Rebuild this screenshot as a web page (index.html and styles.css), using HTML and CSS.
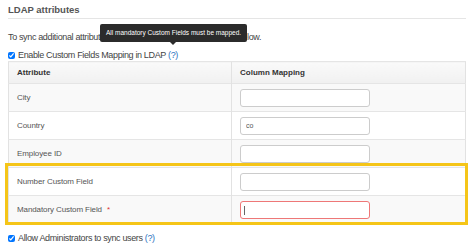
FILE: index.html
```html
<!DOCTYPE html>
<html lang="en">
<head>
    <meta charset="UTF-8">
    <title>LDAP attributes</title>
    <link rel="stylesheet" href="styles.css">
</head>
<body>
    <div class="section">
        <h2 class="section-title">LDAP attributes</h2>

        <p class="intro">
            To sync additional attributes, map them to Custom Fields listed below.
            <span class="tooltip">All mandatory Custom Fields must be mapped.</span>
        </p>

        <label class="check-row">
            <input type="checkbox" checked>
            <span>Enable Custom Fields Mapping in LDAP <a href="#" class="help">(?)</a></span>
        </label>

        <div class="table-wrap">
            <table class="mapping">
                <thead>
                    <tr>
                        <th>Attribute</th>
                        <th>Column Mapping</th>
                    </tr>
                </thead>
                <tbody>
                    <tr>
                        <td>City</td>
                        <td><input type="text" class="field"></td>
                    </tr>
                    <tr>
                        <td>Country</td>
                        <td><input type="text" class="field" value="co"></td>
                    </tr>
                    <tr>
                        <td>Employee ID</td>
                        <td><input type="text" class="field"></td>
                    </tr>
                    <tr>
                        <td>Number Custom Field</td>
                        <td><input type="text" class="field"></td>
                    </tr>
                    <tr>
                        <td>Mandatory Custom Field <span class="required">*</span></td>
                        <td>
                            <div class="field-wrap">
                                <input type="text" class="field field-error">
                                <span class="caret"></span>
                            </div>
                        </td>
                    </tr>
                </tbody>
            </table>
            <div class="highlight"></div>
        </div>

        <label class="check-row bottom">
            <input type="checkbox" checked>
            <span>Allow Administrators to sync users <a href="#" class="help">(?)</a></span>
        </label>
    </div>
</body>
</html>
```

FILE: styles.css
```css
* {
    box-sizing: border-box;
    margin: 0;
    padding: 0;
}

body {
    font-family: 'Liberation Sans', Arial, sans-serif;
    font-size: 9px;
    color: #333;
    background: white;
    padding: 0 8px;
}

.section-title {
    font-size: 9.5px;
    font-weight: bold;
    color: #555;
    padding-top: 4px;
    height: 19px;
    border-bottom: 1px solid #e5e5e5;
}

.intro,
.check-row {
    font-size: 9px;
    letter-spacing: -0.35px;
    color: #444;
}

.intro {
    position: relative;
    margin-top: 12px;
    line-height: 12px;
}

.tooltip {
    position: absolute;
    left: 92px;
    top: -7px;
    background: #2b2b2b;
    color: white;
    font-size: 6.5px;
    letter-spacing: 0;
    line-height: 18px;
    padding: 0 6px;
    border-radius: 2px;
    white-space: nowrap;
}

.tooltip::after {
    content: '';
    position: absolute;
    left: 70px;
    bottom: -3px;
    border-left: 3px solid transparent;
    border-right: 3px solid transparent;
    border-top: 3px solid #2b2b2b;
}

.check-row {
    display: flex;
    align-items: center;
    gap: 3px;
    margin-top: 6px;
    height: 12px;
}

.check-row input {
    width: 7px;
    height: 7px;
    margin: 0;
}

.help {
    color: #2a72c0;
    text-decoration: none;
}

.table-wrap {
    position: relative;
}

.mapping {
    width: 458px;
    border-collapse: collapse;
    border: 1px solid #e2e2e2;
}

.mapping th,
.mapping td {
    text-align: left;
    padding: 0 8px;
    border-top: 1px solid #e5e5e5;
}

.mapping th {
    height: 22px;
    font-size: 8px;
    font-weight: bold;
    color: #333;
    background: linear-gradient(#fafafa, #f0f0f0);
}

.mapping th + th,
.mapping td + td {
    border-left: 1px solid #e2e2e2;
}

.mapping td {
    height: 28px;
    font-size: 8px;
    letter-spacing: -0.1px;
    color: #555;
}

.mapping tbody tr:nth-child(odd) td {
    background: #f9f9f9;
}

.mapping th:first-child {
    width: 223px;
}

.field {
    display: block;
    width: 130px;
    height: 18px;
    border: 1px solid #ccc;
    border-radius: 3px;
    background: white;
    font-family: inherit;
    font-size: 7px;
    color: #555;
    padding: 0 5px;
    outline: none;
}

.field-error {
    border-color: #e77;
}

.field-wrap {
    position: relative;
}

.caret {
    position: absolute;
    left: 4px;
    top: 5px;
    width: 1px;
    height: 9px;
    background: #666;
}

.required {
    color: #d33;
    margin-left: 3px;
}

.highlight {
    position: absolute;
    left: -3px;
    right: -2px;
    top: 102px;
    height: 62px;
    border: 3px solid #f5c518;
}

.check-row.bottom {
    margin-top: 8px;
}
```
